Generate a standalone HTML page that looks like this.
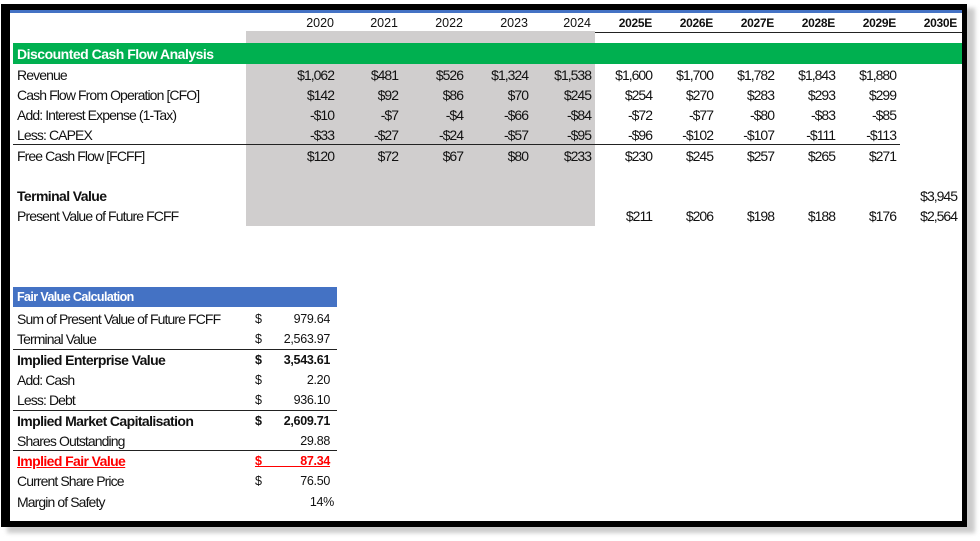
<!DOCTYPE html>
<html><head><meta charset="utf-8"><style>
*{margin:0;padding:0;box-sizing:border-box}
body{width:980px;height:541px;background:#fff;position:relative;overflow:hidden;font-family:"Liberation Sans",Arial,sans-serif;color:#111}
.a{position:absolute;white-space:nowrap}
.t{font-size:14px;letter-spacing:-0.9px;line-height:20px}
.r{text-align:right}
.y{font-size:12px;font-weight:bold;line-height:20px}
.n{font-size:14px;letter-spacing:-1px;line-height:20px;text-align:right;width:60px}
.b{font-weight:bold}
.ln{position:absolute;height:1px;background:#222}
</style></head><body>
<div class="a" style="left:7px;top:8px;width:968px;height:525px;background:#ccc;filter:blur(2px)"></div>
<div class="a" style="left:1px;top:4px;width:966px;height:523px;background:#000"></div>
<div class="a" style="left:10px;top:10px;width:952px;height:511px;background:#fff"></div>
<div class="a" style="left:10px;top:10px;width:952px;height:3px;background:#4472c4"></div>
<div class="a" style="left:246px;top:31px;width:349px;height:195px;background:#d0cece"></div>
<div class="a" style="left:13px;top:43px;width:949px;height:21px;background:#00b050"></div>
<div class="ln" style="left:595px;top:32px;width:367px;height:1px"></div>
<div class="ln" style="left:13px;top:144px;width:887px"></div>
<div class="a b" style="left:17px;top:44px;color:#fff;font-size:14px;line-height:21px;letter-spacing:-0.5px">Discounted Cash Flow Analysis</div>
<div class="a t" style="left:17px;top:65px">Revenue</div>
<div class="a t" style="left:17px;top:85px">Cash Flow From Operation [CFO]</div>
<div class="a t" style="left:17px;top:105px">Add: Interest Expense (1-Tax)</div>
<div class="a t" style="left:17px;top:125px">Less: CAPEX</div>
<div class="a t" style="left:17px;top:146px">Free Cash Flow [FCFF]</div>
<div class="a t b" style="left:17px;top:186px;letter-spacing:-0.6px">Terminal Value</div>
<div class="a t" style="left:17px;top:206px">Present Value of Future FCFF</div>
<div id="g"></div>
<div class="a" style="left:13px;top:287px;width:324px;height:20px;background:#4472c4"></div>
<div class="a b" style="left:17px;top:287px;color:#fff;font-size:12.5px;line-height:20px;letter-spacing:-0.6px">Fair Value Calculation</div>
<div class="ln" style="left:13px;top:349px;width:324px"></div>
<div class="ln" style="left:13px;top:410px;width:324px"></div>
<div class="ln" style="left:13px;top:450px;width:324px"></div>
<div class="a" style="left:255px;top:466px;width:75px;height:1px;background:#f00"></div>
<div id="f"></div>
<script>
var cols=[334,398,463,528,591,652,713,774,835,896,957];
var yrs=["2020","2021","2022","2023","2024","2025E","2026E","2027E","2028E","2029E","2030E"];
var rows=[[65,["$1,062","$481","$526","$1,324","$1,538","$1,600","$1,700","$1,782","$1,843","$1,880",""]],
[85,["$142","$92","$86","$70","$245","$254","$270","$283","$293","$299",""]],
[105,["-$10","-$7","-$4","-$66","-$84","-$72","-$77","-$80","-$83","-$85",""]],
[125,["-$33","-$27","-$24","-$57","-$95","-$96","-$102","-$107","-$111","-$113",""]],
[146,["$120","$72","$67","$80","$233","$230","$245","$257","$265","$271",""]],
[186,["","","","","","","","","","","$3,945"]],
[206,["","","","","","$211","$206","$198","$188","$176","$2,564"]]];
var h="";
for(var i=0;i<11;i++){h+='<div class="a y r" style="left:'+(cols[i]-60)+'px;width:60px;top:13px;'+(i>4?'letter-spacing:-0.3px':'font-weight:normal;font-size:12.5px')+'">'+yrs[i]+'</div>';}
rows.forEach(function(r){r[1].forEach(function(v,i){if(v)h+='<div class="a n" style="left:'+(cols[i]-60)+'px;top:'+r[0]+'px">'+v+'</div>';});});
document.getElementById('g').innerHTML=h;
var fr=[["Sum of Present Value of Future FCFF","$","979.64",0],["Terminal Value","$","2,563.97",0],["Implied Enterprise Value","$","3,543.61",1],["Add: Cash","$","2.20",0],["Less: Debt","$","936.10",0],["Implied Market Capitalisation","$","2,609.71",1],["Shares Outstanding","","29.88",0],["Implied Fair Value","$","87.34",2],["Current Share Price","$","76.50",0],["Margin of Safety","","14%",0]];
var f="";
fr.forEach(function(r,i){var t=309+i*20.3;var st=r[3]==1?'font-weight:bold;letter-spacing:-0.6px;':r[3]==2?'font-weight:bold;letter-spacing:-0.6px;color:#f00;text-decoration:underline;':'';
f+='<div class="a t" style="left:17px;top:'+t+'px;font-size:14px;'+st+'">'+r[0]+'</div>';
if(r[1])f+='<div class="a" style="left:255px;top:'+t+'px;font-size:12.5px;line-height:20px;'+(r[3]?'font-weight:bold;':'')+(r[3]==2?'color:#f00;':'')+'">'+r[1]+'</div>';
f+='<div class="a r" style="left:230px;width:'+(r[2]=="14%"?104:100)+'px;top:'+t+'px;font-size:12.5px;line-height:20px;letter-spacing:-0.3px;'+(r[3]?'font-weight:bold;':'')+(r[3]==2?'color:#f00;':'')+'">'+r[2]+'</div>';});
document.getElementById('f').innerHTML=f;
</script>
</body></html>
